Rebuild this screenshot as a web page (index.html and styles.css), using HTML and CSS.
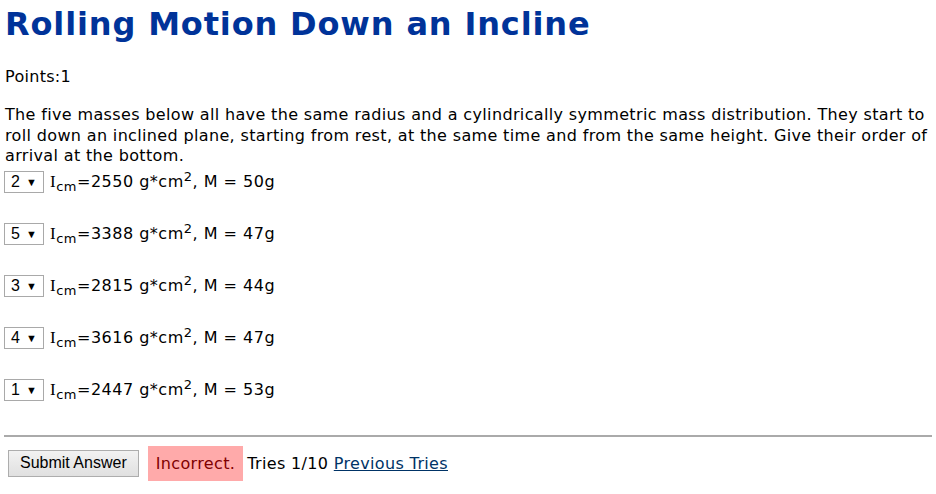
FILE: index.html
```html
<!DOCTYPE html>
<html>
<head>
<meta charset="utf-8">
<link rel="stylesheet" href="styles.css">
</head>
<body>
<h1 class="title">Rolling Motion Down an Incline</h1>
<div class="points">Points:1</div>
<p class="question">The five masses below all have the same radius and a cylindrically symmetric mass distribution. They start to roll down an inclined plane, starting from rest, at the same time and from the same height. Give their order of arrival at the bottom.</p>
<div class="items">
  <div class="item"><span class="sel">2<span class="arrow">▼</span></span><span class="expr"><span class="iv">I</span><sub>cm</sub>=2550 g*cm<sup>2</sup>, M = 50g</span></div>
  <div class="item"><span class="sel">5<span class="arrow">▼</span></span><span class="expr"><span class="iv">I</span><sub>cm</sub>=3388 g*cm<sup>2</sup>, M = 47g</span></div>
  <div class="item"><span class="sel">3<span class="arrow">▼</span></span><span class="expr"><span class="iv">I</span><sub>cm</sub>=2815 g*cm<sup>2</sup>, M = 44g</span></div>
  <div class="item"><span class="sel">4<span class="arrow">▼</span></span><span class="expr"><span class="iv">I</span><sub>cm</sub>=3616 g*cm<sup>2</sup>, M = 47g</span></div>
  <div class="item"><span class="sel">1<span class="arrow">▼</span></span><span class="expr"><span class="iv">I</span><sub>cm</sub>=2447 g*cm<sup>2</sup>, M = 53g</span></div>
</div>
<hr class="rule">
<div class="footer">
  <button class="submit">Submit Answer</button>
  <span class="incorrect">Incorrect.</span>
  <span class="tries">Tries 1/10 <a href="#" class="prev">Previous Tries</a></span>
</div>
</body>
</html>
```
FILE: styles.css
```css
html, body {
  margin: 0;
  padding: 0;
  background: #fff;
}
body {
  padding: 0 2px 0 5px;
  font-family: Verdana, "DejaVu Sans", sans-serif;
  font-size: 16px;
  letter-spacing: 0.35px;
  color: #000;
}
.title {
  margin: 0;
  padding-top: 3px;
  font-family: Verdana, "DejaVu Sans", sans-serif;
  font-weight: bold;
  font-size: 32px;
  letter-spacing: 0.85px;
  line-height: 42px;
  color: #003399;
}
.points {
  margin-top: 22px;
  font-size: 16px;
  letter-spacing: 0.3px;
  line-height: 20px;
}
.question {
  margin: 18px 0 0 0;
  font-size: 16px;
  line-height: 20.5px;
}
.items {
  display: flex;
  flex-direction: column;
  gap: 30px;
  margin-top: 4px;
}
.item {
  display: flex;
  align-items: center;
  height: 22px;
}
.sel {
  display: inline-flex;
  align-items: center;
  justify-content: space-between;
  box-sizing: border-box;
  width: 40px;
  height: 22px;
  margin-left: -1px;
  padding: 0 6px 0 6px;
  border: 1px solid #a9a9a9;
  background: #fff;
  font-family: "Liberation Sans", Arial, sans-serif;
  font-size: 16px;
  letter-spacing: 0;
}
.arrow {
  font-size: 11px;
}
.expr {
  margin-left: 6px;
  font-size: 16px;
  letter-spacing: 0.5px;
  line-height: 22px;
}
.iv {
  font-family: "Liberation Serif", "Times New Roman", serif;
  font-size: 17px;
}
.expr sub, .expr sup {
  font-size: 13px;
  line-height: 0;
}
.rule {
  margin: 34px 0 0 -1px;
  width: calc(100% - 1px);
  border: 0;
  border-top: 2px solid #aaa;
  height: 0;
}
.footer {
  display: flex;
  align-items: center;
  margin-top: 9px;
}
.submit {
  margin-left: 3px;
  height: 27px;
  padding: 0 11px;
  border: 1px solid #adadad;
  border-radius: 0;
  background: linear-gradient(#f2f2f2, #e0e0e0);
  font-family: "Liberation Sans", Arial, sans-serif;
  font-size: 16px;
  letter-spacing: 0;
  color: #000;
}
.incorrect {
  margin-left: 9px;
  padding: 0 8px;
  height: 35px;
  display: inline-flex;
  align-items: center;
  background: #ffaaaa;
  color: #800000;
  font-size: 16px;
}
.tries {
  margin-left: 4px;
  font-size: 16px;
}
.prev {
  color: #003366;
}
```
